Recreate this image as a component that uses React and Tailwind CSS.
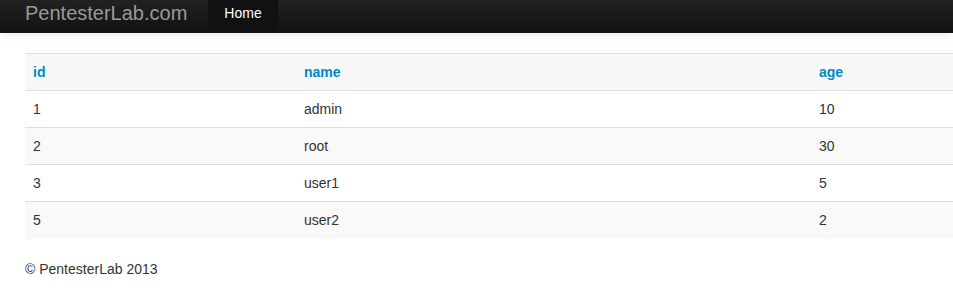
import React from "react";

const rows = [
  { id: "1", name: "admin", age: "10" },
  { id: "2", name: "root", age: "30" },
  { id: "3", name: "user1", age: "5" },
  { id: "5", name: "user2", age: "2" },
];

const App = () => {
  return (
    <div className="min-h-screen bg-white text-[14px] text-[#333] font-['Liberation_Sans',Arial,sans-serif]">
      {/* navbar */}
      <div className="h-[33px] bg-gradient-to-b from-[#222] to-[#111] shadow-[0_1px_10px_rgba(0,0,0,0.1)] flex items-stretch pl-[25px]">
        <div className="text-[20px] leading-[26px] text-[#999] pr-[21px]">
          PentesterLab.com
        </div>
        <div className="bg-[#111] text-white px-[16px] leading-[26px]">Home</div>
      </div>

      {/* table */}
      <div className="pt-[20px] pl-[25px]">
        <table className="w-[940px] border-collapse">
          <thead>
            <tr className="bg-[#f8f8f8] border-t border-[#ddd]">
              <th className="w-[271px] text-left font-bold text-[#0088cc] px-[8px] h-[37px]">id</th>
              <th className="w-[515px] text-left font-bold text-[#0088cc] px-[8px]">name</th>
              <th className="text-left font-bold text-[#0088cc] px-[8px]">age</th>
            </tr>
          </thead>
          <tbody>
            {rows.map((r, i) => (
              <tr
                key={r.id}
                className={`border-t border-[#ddd] ${i % 2 === 1 ? "bg-[#f9f9f9]" : "bg-white"}`}
              >
                <td className="px-[8px] h-[37px]">{r.id}</td>
                <td className="px-[8px]">{r.name}</td>
                <td className="px-[8px]">{r.age}</td>
              </tr>
            ))}
          </tbody>
        </table>
        <div className="pt-[20px]">© PentesterLab 2013</div>
      </div>
    </div>
  );
};

export default App;
